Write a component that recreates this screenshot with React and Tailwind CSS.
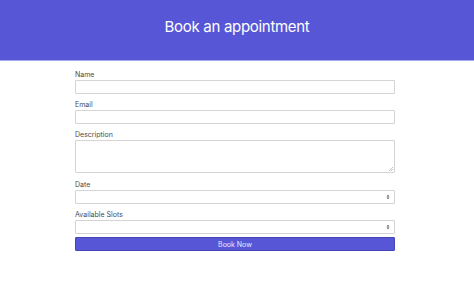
import React from "react";

function Arrows() {
  return (
    <svg width="4" height="6" viewBox="0 0 4 6" className="absolute right-[4px] top-1/2 -translate-y-1/2">
      <path d="M0.5 2.5 L2 0.8 L3.5 2.5 Z" fill="#555" />
      <path d="M0.5 3.5 L2 5.2 L3.5 3.5 Z" fill="#555" />
    </svg>
  );
}

function Label({ children }) {
  return (
    <div className="h-[11px] text-[7px] leading-[11px] text-[#4a4a4a]">{children}</div>
  );
}

export default function App() {
  return (
    <div className="w-[474px] h-[305px] bg-white" style={{ fontFamily: "Inter, 'Liberation Sans', sans-serif" }}>
      <div className="h-[61px] bg-[#5656d7] border-b border-[#a9a9ee] flex items-center justify-center">
        <h1 className="text-[15px] text-white font-normal leading-none -mt-[7px] tracking-[-0.02em]">Book an appointment</h1>
      </div>
      <div className="w-[320px] ml-[75px] pt-[8px] flex flex-col">
        <Label>Name</Label>
        <div className="h-[14px] border border-[#d4d4d4] rounded-[1px]" />
        <div className="h-[5px]" />
        <Label>Email</Label>
        <div className="h-[14px] border border-[#d4d4d4] rounded-[1px]" />
        <div className="h-[5px]" />
        <Label>Description</Label>
        <div className="relative h-[33px] border border-[#d4d4d4] rounded-[1px]">
          <svg width="4" height="4" viewBox="0 0 4 4" className="absolute right-[1px] bottom-[1px]">
            <path d="M4 0 L0 4 M4 2 L2 4" stroke="#999" strokeWidth="0.6" />
          </svg>
        </div>
        <div className="h-[6px]" />
        <Label>Date</Label>
        <div className="relative h-[14px] border border-[#d4d4d4] rounded-[1px]">
          <Arrows />
        </div>
        <div className="h-[5px]" />
        <Label>Available Slots</Label>
        <div className="relative h-[14px] border border-[#d4d4d4] rounded-[1px]">
          <Arrows />
        </div>
        <div className="h-[3px]" />
        <div className="h-[14px] bg-[#5656d7] border border-[#4646b8] rounded-[1px] flex items-center justify-center text-[7px] text-[#e8e8ff] leading-none">
          Book Now
        </div>
      </div>
    </div>
  );
}
